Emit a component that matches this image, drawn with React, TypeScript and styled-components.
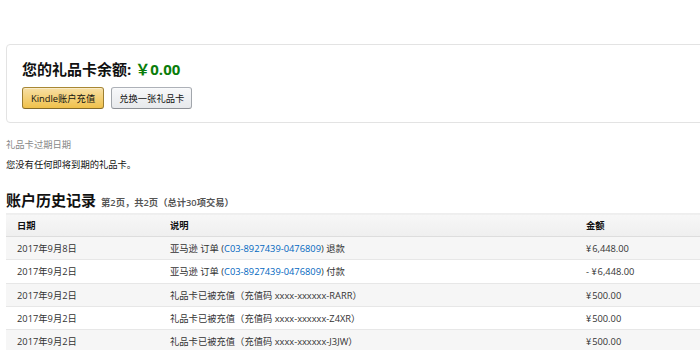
import React from 'react';
import styled, { createGlobalStyle } from 'styled-components';

const GlobalStyle = createGlobalStyle`
  html, body {
    margin: 0;
    padding: 0;
    overflow: hidden;
    background: #fff;
  }
  body {
    font-family: "Open Sans", "Noto Sans CJK SC", sans-serif;
    color: #111;
  }
`;

const Page = styled.div`
  width: 820px;
  padding: 44px 0 0 6px;
`;

const BalanceCard = styled.section`
  border: 1px solid #e3e3e3;
  border-radius: 4px;
  padding: 14px 15px 13px;
`;

const BalanceTitle = styled.h2`
  margin: 0 0 8px;
  font-size: 15px;
  line-height: 20px;
  font-weight: 700;
  color: #111;
`;

const Amount = styled.span`
  color: #0a7d0a;
  margin-left: 4px;
`;

const ButtonRow = styled.div`
  display: flex;
  gap: 7px;
`;

const Button = styled.button<{ $primary?: boolean }>`
  height: 22px;
  padding: 0 ${p => (p.$primary ? 8 : 7)}px;
  border-radius: 3px;
  border: 1px solid;
  border-color: ${p => (p.$primary ? '#a88734 #9c7e31 #846a29' : '#adb1b8 #a2a6ac #8d9096')};
  background: ${p =>
    p.$primary
      ? 'linear-gradient(to bottom, #f7dfa5, #f0c14b)'
      : 'linear-gradient(to bottom, #f7f8fa, #e7e9ec)'};
  box-shadow: 0 1px 0 rgba(255, 255, 255, 0.4) inset;
  font-family: inherit;
  font-size: 9.3px;
  color: #111;
  cursor: pointer;
`;

const Label = styled.div`
  margin-top: 15px;
  font-size: 9.3px;
  line-height: 14px;
  color: #888;
`;

const Note = styled.div`
  margin-top: 6px;
  font-size: 9.3px;
  line-height: 14px;
  color: #111;
`;

const Heading = styled.div`
  margin-top: 18px;
  margin-bottom: 3px;
  display: flex;
  align-items: baseline;
  gap: 5px;
`;

const HeadingTitle = styled.h1`
  margin: 0;
  font-size: 15px;
  line-height: 20px;
  font-weight: 700;
`;

const HeadingMeta = styled.span`
  font-size: 9.3px;
  font-weight: 600;
  color: #555;
`;

const Table = styled.table`
  width: 814px;
  border-collapse: collapse;
  font-size: 9.3px;
  table-layout: fixed;
`;

const HeadRow = styled.tr`
  background: linear-gradient(to bottom, #f7f7f7, #efefef);
  border-top: 1px solid #eee;
  border-bottom: 1px solid #ddd;
`;

const Th = styled.th<{ $w?: number }>`
  width: ${p => (p.$w ? `${p.$w}px` : 'auto')};
  height: 22px;
  padding: 0 0 0 11px;
  text-align: left;
  font-weight: 700;
  color: #111;
`;

const Row = styled.tr<{ $alt: boolean }>`
  background: ${p => (p.$alt ? '#f6f6f6' : '#fff')};
  border-bottom: 1px solid #e7e7e7;
`;

const Td = styled.td`
  height: 22.3px;
  padding: 0 0 0 11px;
  color: #333;
  white-space: nowrap;
`;

const Link = styled.a`
  color: #0066c0;
  text-decoration: none;
`;

const Yen = styled.span`
  font-family: "Noto Sans CJK SC", sans-serif;
  margin-right: 1px;
`;

type Tx = { date: string; desc: React.ReactNode; sign?: string; amount: string };

const rows: Tx[] = [
  {
    date: '2017年9月8日',
    desc: (
      <>
        亚马逊 订单 (<Link href="#">C03-8927439-0476809</Link>) 退款
      </>
    ),
    amount: '6,448.00',
  },
  {
    date: '2017年9月2日',
    desc: (
      <>
        亚马逊 订单 (<Link href="#">C03-8927439-0476809</Link>) 付款
      </>
    ),
    sign: '- ',
    amount: '6,448.00',
  },
  { date: '2017年9月2日', desc: '礼品卡已被充值（充值码 xxxx-xxxxxx-RARR）', amount: '500.00' },
  { date: '2017年9月2日', desc: '礼品卡已被充值（充值码 xxxx-xxxxxx-Z4XR）', amount: '500.00' },
  { date: '2017年9月2日', desc: '礼品卡已被充值（充值码 xxxx-xxxxxx-J3JW）', amount: '500.00' },
];

export default function App() {
  return (
    <Page>
      <GlobalStyle />
      <BalanceCard>
        <BalanceTitle>
          您的礼品卡余额:<Amount>￥0.00</Amount>
        </BalanceTitle>
        <ButtonRow>
          <Button $primary>Kindle账户充值</Button>
          <Button>兑换一张礼品卡</Button>
        </ButtonRow>
      </BalanceCard>

      <Label>礼品卡过期日期</Label>
      <Note>您没有任何即将到期的礼品卡。</Note>

      <Heading>
        <HeadingTitle>账户历史记录</HeadingTitle>
        <HeadingMeta>第2页，共2页（总计30项交易）</HeadingMeta>
      </Heading>

      <Table>
        <thead>
          <HeadRow>
            <Th $w={142}>日期</Th>
            <Th $w={405}>说明</Th>
            <Th>金额</Th>
          </HeadRow>
        </thead>
        <tbody>
          {rows.map((r, i) => (
            <Row key={i} $alt={i % 2 === 0}>
              <Td>{r.date}</Td>
              <Td>{r.desc}</Td>
              <Td>
                {r.sign}
                <Yen>¥</Yen>
                {r.amount}
              </Td>
            </Row>
          ))}
        </tbody>
      </Table>
    </Page>
  );
}
